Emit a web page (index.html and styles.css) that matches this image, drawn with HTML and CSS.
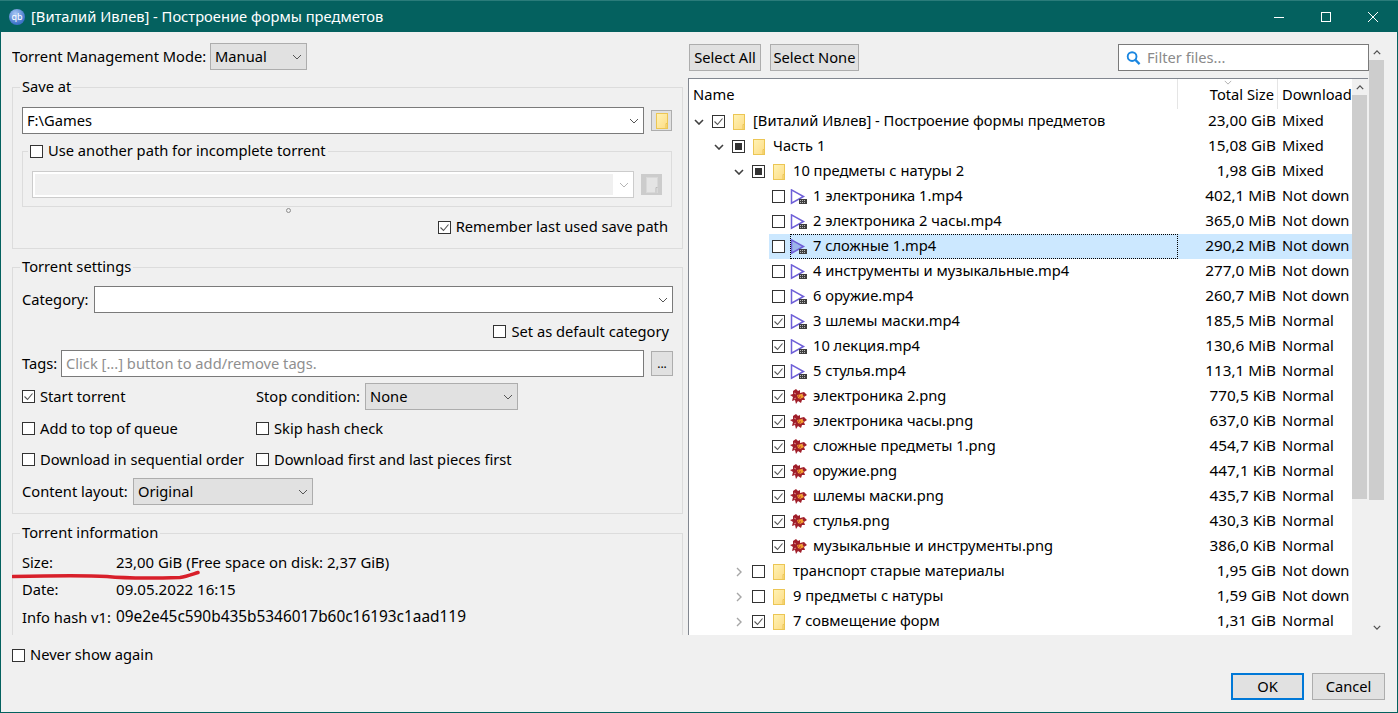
FILE: index.html
```html
<!DOCTYPE html>
<html lang="ru">
<head>
<meta charset="utf-8">
<title>[Виталий Ивлев] - Построение формы предметов</title>
<link rel="stylesheet" href="styles.css">
</head>
<body>
<svg class="defs" aria-hidden="true">
  <symbol id="chev" viewBox="0 0 10 6"><path d="M1 1l4 4 4-4" fill="none" stroke="currentColor"/></symbol>
  <symbol id="chev-bold" viewBox="0 0 10 6"><path d="M1 1l4 4 4-4" fill="none" stroke="currentColor" stroke-width="1.6"/></symbol>
  <symbol id="chev-r" viewBox="0 0 6 10"><path d="M1 1l4 4-4 4" fill="none" stroke="currentColor" stroke-width="1.4"/></symbol>
  <symbol id="up" viewBox="0 0 10 6"><path d="M1 5l4-4 4 4" fill="none" stroke="currentColor" stroke-width="1.6"/></symbol>
  <symbol id="tick" viewBox="0 0 11 11"><path d="M1.5 5.5l3 3 5-6" fill="none" stroke="#555" stroke-width="1.1"/></symbol>
  <symbol id="folder" viewBox="0 0 12 16">
    <defs><linearGradient id="fg" x1="0" y1="0" x2="1" y2="1"><stop offset="0" stop-color="#fff3b5"/><stop offset="1" stop-color="#fddc86"/></linearGradient></defs>
    <rect x=".5" y=".5" width="11" height="15" fill="url(#fg)" stroke="#ecc654"/>
    <path d="M10 15.5v-5h1.5" fill="none" stroke="#ecc654"/>
  </symbol>
  <symbol id="folder-off" viewBox="0 0 12 16">
    <rect x=".5" y=".5" width="11" height="15" fill="#e4e4e4" stroke="#d8d8d8"/>
    <path d="M10 15.5v-5h1.5" fill="none" stroke="#bbb"/>
  </symbol>
  <symbol id="video" viewBox="0 0 18 16">
    <path class="vid-tri" d="M1.500 .9L13.500 7.500 1.500 14.200z"/>
    <rect x="9" y="10" width="8" height="5" fill="#3e3e3e"/>
    <path d="M10 11.500h1m1 0h1m1 0h1M10 13.500h1m1 0h1m1 0h1" stroke="#b8b8b8"/>
  </symbol>
  <symbol id="png" viewBox="0 0 18 16">
    <path d="M6 0l2 2 2-1 0 3 4-1 3 3-3 2 1 3-3 0-1 3-3-2-2 3-1-4-3 1 1-4-3-2 3-1 0-3z" fill="#a01f2a"/>
    <path d="M4 4l2 1M4 10l2-1M13 5l-2 1" stroke="#d98a8a"/>
    <path d="M7 6l5-1 2 3-4 2-2-1z" fill="#f2a12e"/>
    <path d="M8 7h1m1 1h1m-2 1h1" stroke="#b3331f"/>
  </symbol>
</svg>

<div class="window">
  <header class="titlebar">
    <span class="app-icon">qb</span>
    <span class="title">[Виталий Ивлев] - Построение формы предметов</span>
    <div class="win-btns">
      <svg class="win-btn" viewBox="0 0 10 10"><path d="M0 5.500h10" stroke="#fff"/></svg>
      <svg class="win-btn" viewBox="0 0 10 10"><rect x=".5" y=".5" width="9" height="9" fill="none" stroke="#fff"/></svg>
      <svg class="win-btn" viewBox="0 0 10 10"><path d="M0 0l10 10M10 0L0 10" stroke="#fff"/></svg>
    </div>
  </header>

  <main class="content">
    <section class="left">
      <div class="mode-row">
        <span class="lab-mode">Torrent Management Mode:</span>
        <div class="combo btnlike w-mode"><span>Manual</span><svg class="arrow"><use href="#chev"/></svg></div>
      </div>

      <fieldset class="group save-group">
        <legend>Save at</legend>
        <div class="path-row">
          <div class="combo edit grow"><span>F:\Games</span><svg class="arrow"><use href="#chev"/></svg></div>
          <button class="browse"><svg class="browse-ico"><use href="#folder"/></svg></button>
        </div>
        <fieldset class="group sub-group">
          <legend class="check-legend"><span class="cb"></span>Use another path for incomplete torrent</legend>
          <div class="path-row">
            <div class="combo disabled grow"><span class="disabled-fill"></span><svg class="arrow"><use href="#chev"/></svg></div>
            <button class="browse off"><svg class="browse-ico"><use href="#folder-off"/></svg></button>
          </div>
        </fieldset>
        <div class="handle-row"><span class="handle"></span></div>
        <div class="right-check tall"><span class="cb"><svg><use href="#tick"/></svg></span>Remember last used save path</div>
      </fieldset>

      <fieldset class="group settings-group">
        <legend>Torrent settings</legend>
        <div class="field-row">
          <span class="lab-cat">Category:</span>
          <div class="combo edit grow"><span></span><svg class="arrow"><use href="#chev"/></svg></div>
        </div>
        <div class="right-check default-row"><span class="cb"></span>Set as default category</div>
        <div class="field-row">
          <span class="lab-tags">Tags:</span>
          <div class="line-input grow placeholder">Click [...] button to add/remove tags.</div>
          <button class="dots">...</button>
        </div>
        <div class="options">
          <label class="opt"><span class="cb"><svg><use href="#tick"/></svg></span>Start torrent</label>
          <div class="field-row"><span class="lab-stop">Stop condition:</span><div class="combo btnlike w-stop"><span>None</span><svg class="arrow"><use href="#chev"/></svg></div></div>
          <label class="opt"><span class="cb"></span>Add to top of queue</label>
          <label class="opt"><span class="cb"></span>Skip hash check</label>
          <label class="opt"><span class="cb"></span>Download in sequential order</label>
          <label class="opt"><span class="cb"></span>Download first and last pieces first</label>
          <div class="field-row span2"><span class="lab-layout">Content layout:</span><div class="combo btnlike w-layout"><span>Original</span><svg class="arrow"><use href="#chev"/></svg></div></div>
        </div>
      </fieldset>

      <fieldset class="group info-group">
        <legend>Torrent information</legend>
        <div class="info-grid">
          <span>Size:</span><span class="v-size">23,00 GiB (Free space on disk: 2,37 GiB)</span>
          <span>Date:</span><span class="v-date">09.05.2022 16:15</span>
          <span>Info hash v1:</span><span class="v-hash">09e2e45c590b435b5346017b60c16193c1aad119</span>
        </div>
      </fieldset>
      <svg class="scribble" viewBox="0 0 190 10"><path d="M1 7.500C40 6.500 80 6.500 95 7.500 115 9.500 150 9 168 8.500 175 7.500 181 5 186 3.500" fill="none" stroke="#d81f2a" stroke-width="3.500" stroke-linecap="round"/></svg>
    </section>

    <section class="right">
      <div class="right-main">
        <div class="toolbar">
          <button class="btn sel-all">Select All</button>
          <button class="btn sel-none">Select None</button>
          <div class="filter">
            <svg class="search" viewBox="0 0 16 16"><circle cx="6.500" cy="6.500" r="4.700" fill="none" stroke="#1a86e0" stroke-width="2"/><path d="M10 10l4.500 4.500" stroke="#1a86e0" stroke-width="2.400"/></svg>
            <span class="placeholder-f">Filter files...</span>
          </div>
        </div>
        <div class="tree">
          <div class="tree-body">
            <div class="tree-head">
              <div class="h-name">Name</div>
              <div class="h-size">Total Size<svg class="sort"><use href="#chev"/></svg></div>
              <div class="h-prio">Download</div>
            </div>
            <div class="rows">
              <div class="row l0"><span class="twist open"><svg class="chev-d"><use href="#chev-bold"/></svg></span><div class="item"><span class="cb"><svg><use href="#tick"/></svg></span><div class="name-cell"><svg class="ico-folder"><use href="#folder"/></svg><span class="name">[Виталий Ивлев] - Построение формы предметов</span></div><span class="size">23,00 GiB</span><span class="prio">Mixed</span></div></div>
              <div class="row l1"><span class="twist open"><svg class="chev-d"><use href="#chev-bold"/></svg></span><div class="item"><span class="cb part"></span><div class="name-cell"><svg class="ico-folder"><use href="#folder"/></svg><span class="name">Часть 1</span></div><span class="size">15,08 GiB</span><span class="prio">Mixed</span></div></div>
              <div class="row l2"><span class="twist open"><svg class="chev-d"><use href="#chev-bold"/></svg></span><div class="item"><span class="cb part"></span><div class="name-cell"><svg class="ico-folder"><use href="#folder"/></svg><span class="name">10 предметы с натуры 2</span></div><span class="size">1,98 GiB</span><span class="prio">Mixed</span></div></div>
              <div class="row l3"><span class="twist"></span><div class="item"><span class="cb"></span><div class="name-cell"><svg class="ico-file"><use href="#video"/></svg><span class="name">1 электроника 1.mp4</span></div><span class="size">402,1 MiB</span><span class="prio">Not down</span></div></div>
              <div class="row l3"><span class="twist"></span><div class="item"><span class="cb"></span><div class="name-cell"><svg class="ico-file"><use href="#video"/></svg><span class="name">2 электроника 2 часы.mp4</span></div><span class="size">365,0 MiB</span><span class="prio">Not down</span></div></div>
              <div class="row l3"><span class="twist"></span><div class="item selected"><span class="cb"></span><div class="name-cell focus"><svg class="ico-file"><use href="#video"/></svg><span class="name">7 сложные 1.mp4</span></div><span class="size">290,2 MiB</span><span class="prio">Not down</span></div></div>
              <div class="row l3"><span class="twist"></span><div class="item"><span class="cb"></span><div class="name-cell"><svg class="ico-file"><use href="#video"/></svg><span class="name">4 инструменты и музыкальные.mp4</span></div><span class="size">277,0 MiB</span><span class="prio">Not down</span></div></div>
              <div class="row l3"><span class="twist"></span><div class="item"><span class="cb"></span><div class="name-cell"><svg class="ico-file"><use href="#video"/></svg><span class="name">6 оружие.mp4</span></div><span class="size">260,7 MiB</span><span class="prio">Not down</span></div></div>
              <div class="row l3"><span class="twist"></span><div class="item"><span class="cb"><svg><use href="#tick"/></svg></span><div class="name-cell"><svg class="ico-file"><use href="#video"/></svg><span class="name">3 шлемы маски.mp4</span></div><span class="size">185,5 MiB</span><span class="prio">Normal</span></div></div>
              <div class="row l3"><span class="twist"></span><div class="item"><span class="cb"><svg><use href="#tick"/></svg></span><div class="name-cell"><svg class="ico-file"><use href="#video"/></svg><span class="name">10 лекция.mp4</span></div><span class="size">130,6 MiB</span><span class="prio">Normal</span></div></div>
              <div class="row l3"><span class="twist"></span><div class="item"><span class="cb"><svg><use href="#tick"/></svg></span><div class="name-cell"><svg class="ico-file"><use href="#video"/></svg><span class="name">5 стулья.mp4</span></div><span class="size">113,1 MiB</span><span class="prio">Normal</span></div></div>
              <div class="row l3"><span class="twist"></span><div class="item"><span class="cb"><svg><use href="#tick"/></svg></span><div class="name-cell"><svg class="ico-file"><use href="#png"/></svg><span class="name">электроника 2.png</span></div><span class="size">770,5 KiB</span><span class="prio">Normal</span></div></div>
              <div class="row l3"><span class="twist"></span><div class="item"><span class="cb"><svg><use href="#tick"/></svg></span><div class="name-cell"><svg class="ico-file"><use href="#png"/></svg><span class="name">электроника часы.png</span></div><span class="size">637,0 KiB</span><span class="prio">Normal</span></div></div>
              <div class="row l3"><span class="twist"></span><div class="item"><span class="cb"><svg><use href="#tick"/></svg></span><div class="name-cell"><svg class="ico-file"><use href="#png"/></svg><span class="name">сложные предметы 1.png</span></div><span class="size">454,7 KiB</span><span class="prio">Normal</span></div></div>
              <div class="row l3"><span class="twist"></span><div class="item"><span class="cb"><svg><use href="#tick"/></svg></span><div class="name-cell"><svg class="ico-file"><use href="#png"/></svg><span class="name">оружие.png</span></div><span class="size">447,1 KiB</span><span class="prio">Normal</span></div></div>
              <div class="row l3"><span class="twist"></span><div class="item"><span class="cb"><svg><use href="#tick"/></svg></span><div class="name-cell"><svg class="ico-file"><use href="#png"/></svg><span class="name">шлемы маски.png</span></div><span class="size">435,7 KiB</span><span class="prio">Normal</span></div></div>
              <div class="row l3"><span class="twist"></span><div class="item"><span class="cb"><svg><use href="#tick"/></svg></span><div class="name-cell"><svg class="ico-file"><use href="#png"/></svg><span class="name">стулья.png</span></div><span class="size">430,3 KiB</span><span class="prio">Normal</span></div></div>
              <div class="row l3"><span class="twist"></span><div class="item"><span class="cb"><svg><use href="#tick"/></svg></span><div class="name-cell"><svg class="ico-file"><use href="#png"/></svg><span class="name">музыкальные и инструменты.png</span></div><span class="size">386,0 KiB</span><span class="prio">Normal</span></div></div>
              <div class="row l2"><span class="twist"><svg class="chev-s"><use href="#chev-r"/></svg></span><div class="item"><span class="cb"></span><div class="name-cell"><svg class="ico-folder"><use href="#folder"/></svg><span class="name">транспорт старые материалы</span></div><span class="size">1,95 GiB</span><span class="prio">Not down</span></div></div>
              <div class="row l2"><span class="twist"><svg class="chev-s"><use href="#chev-r"/></svg></span><div class="item"><span class="cb"></span><div class="name-cell"><svg class="ico-folder"><use href="#folder"/></svg><span class="name">9 предметы с натуры</span></div><span class="size">1,59 GiB</span><span class="prio">Not down</span></div></div>
              <div class="row l2"><span class="twist"><svg class="chev-s"><use href="#chev-r"/></svg></span><div class="item"><span class="cb"><svg><use href="#tick"/></svg></span><div class="name-cell"><svg class="ico-folder"><use href="#folder"/></svg><span class="name">7 совмещение форм</span></div><span class="size">1,31 GiB</span><span class="prio">Normal</span></div></div>
            </div>
          </div>
          <div class="vscroll inner">
            <svg class="sc-arrow"><use href="#up"/></svg>
            <div class="thumb"></div>
          </div>
        </div>
      </div>
      <div class="vscroll outer">
        <svg class="sc-arrow"><use href="#up"/></svg>
        <div class="thumb"></div>
        <svg class="sc-arrow down"><use href="#chev-bold"/></svg>
      </div>
    </section>
  </main>

  <footer class="footer">
    <label class="never"><span class="cb"></span>Never show again</label>
    <div class="actions">
      <button class="btn action primary">OK</button>
      <button class="btn action">Cancel</button>
    </div>
  </footer>
</div>
</body>
</html>
```
FILE: styles.css
```css
* { box-sizing: border-box; }
html, body { margin: 0; padding: 0; }
body {
  width: 1398px;
  height: 713px;
  overflow: hidden;
  font-family: "Noto Sans", "Open Sans", "Liberation Sans", sans-serif;
  font-size: 14.7px;
  line-height: 20px;
  color: #000;
  background: #f0f0f0;
}
button { font: inherit; color: inherit; margin: 0; padding: 0; }
.defs { width: 0; height: 0; position: absolute; }

.window {
  width: 1398px;
  height: 713px;
  display: flex;
  flex-direction: column;
  border: 1px solid #04615f;
  border-top: 0;
  background: #f0f0f0;
}

/* title bar */
.titlebar {
  height: 32px;
  flex: none;
  margin: 0 -1px;
  display: flex;
  align-items: center;
  padding-left: 9px;
  background: #04615f;
  border-top: 1px solid #2a7c7a;
  color: #fff;
}
.app-icon {
  width: 16px;
  height: 16px;
  border-radius: 50%;
  background: radial-gradient(circle at 40% 30%, #a9c8f5, #3d72c9 70%);
  font-size: 9px;
  line-height: 15px;
  text-align: center;
  color: #fff;
}
.title { margin-left: 6px; padding-bottom: 2px; }
.win-btns { margin-left: auto; display: flex; padding-right: 20px; gap: 37px; }
.win-btn { width: 10px; height: 10px; display: block; }

/* main layout */
.content { height: 603px; flex: none; display: flex; }
.left {
  width: 671px;
  margin-left: 11px;
  padding-top: 11px;
  display: flex;
  flex-direction: column;
  position: relative;
  overflow: hidden;
}
.right { margin-left: 5px; padding-top: 12px; display: flex; }
.right-main { width: 680px; display: flex; flex-direction: column; }

/* form bits */
.mode-row, .field-row, .path-row { display: flex; align-items: center; }
.mode-row { height: 27px; }
.lab-mode, .lab-cat, .lab-tags, .lab-stop, .lab-layout { padding-bottom: 2px; white-space: nowrap; }
.lab-mode { width: 198px; }
.lab-cat { width: 72px; }
.lab-tags { width: 39px; }
.lab-stop { width: 109px; }
.lab-layout { width: 111px; }
.grow { flex: 1 1 0; min-width: 0; }

.combo {
  height: 27px;
  display: flex;
  align-items: center;
  justify-content: space-between;
  padding: 0 4px 1px 4px;
  border: 1px solid #adadad;
}
.combo .arrow { width: 10px; height: 6px; margin-top: 1px; color: #555; flex: none; }
.btnlike { background: #e1e1e1; }
.edit { background: #fff; border-color: #7a7a7a; }
.w-mode { width: 97px; }
.w-stop { width: 153px; }
.w-layout { width: 180px; }
.disabled { background: #fff; border-color: #cccccc; padding: 2px 4px 2px 2px; }
.combo.disabled .arrow { color: #b5b5b5; margin-top: 0; }
.disabled-fill { align-self: stretch; width: 578px; background: #f0f0f0; }

.group {
  margin: 0;
  padding: 0;
  min-width: 0;
  border: 1px solid #dcdcdc;
}
.group > legend { padding: 0 2px 2px; margin-left: -2px; line-height: 18px; white-space: nowrap; }

.save-group { margin-top: 7px; padding: 10px 10px 7px 9px; height: 172px; }
.path-row { gap: 7px; }
.browse {
  width: 21px;
  height: 21px;
  border: 1px solid #adadad;
  background: #e1e1e1;
  display: flex;
  align-items: center;
  justify-content: center;
}
.browse.off { background: #cccccc; border-color: #cccccc; }
.browse-ico { width: 12px; height: 16px; }

.sub-group { margin-top: 7px; padding: 10px 9px 8px 9px; }
.group.sub-group > legend { margin-left: -4px; }
.check-legend { display: flex; align-items: center; }
.cb {
  width: 13px;
  height: 13px;
  flex: none;
  display: inline-block;
  border: 1px solid #333;
  background: #fff;
  margin-right: 5px;
  margin-top: 2px;
}
.cb svg { display: block; width: 11px; height: 11px; }
.cb.part { box-shadow: inset 0 0 0 2px #fff, inset 0 0 0 8px #333; }

.handle-row { height: 7px; display: flex; align-items: center; padding-left: 264px; }
.handle { width: 5px; height: 5px; border: 1px solid #8e8e8e; border-radius: 50%; }
.right-check { display: flex; align-items: center; justify-content: flex-end; padding: 0 4px 2px 0; white-space: nowrap; }
.tall { height: 26px; }

.settings-group { margin-top: 8px; padding: 9px 9px 8px 9px; height: 257px; }
.default-row { height: 37px; }
.line-input { height: 27px; border: 1px solid #7a7a7a; background: #fff; padding: 0 4px; line-height: 25px; }
.placeholder { color: #8f8f8f; }
.dots {
  width: 22px;
  height: 25px;
  margin-left: 7px;
  border: 1px solid #adadad;
  background: #e1e1e1;
  font-size: 12px;
}
.options {
  margin-top: 6px;
  display: grid;
  grid-template-columns: 234px 1fr;
  grid-template-rows: 32px 31px 32px 27px;
  align-items: start;
}
.opt { display: flex; align-items: center; white-space: nowrap; height: 27px; padding-bottom: 2px; }
.span2 { grid-column: 1 / 3; }

.info-group { margin-top: 9px; flex: 1; border-bottom: 0; padding: 6px 0 0 9px; }
.info-grid {
  display: grid;
  grid-template-columns: 94px 1fr;
  grid-auto-rows: 27.5px;
  align-items: center;
  white-space: nowrap;
}
.info-grid > span { padding-bottom: 2px; }
.v-size { font-size: 14.9px; }
.v-date { font-size: 15.1px; }
.v-hash { font-size: 15.4px; }
.scribble { position: absolute; left: 0; top: 537px; width: 190px; height: 10px; overflow: visible; }

/* right side */
.toolbar { height: 27px; flex: none; display: flex; padding-left: 1px; }
.btn { background: #e1e1e1; border: 1px solid #adadad; height: 27px; padding-bottom: 1px; }
.sel-all { width: 72px; }
.sel-none { width: 89px; margin-left: 9px; }
.filter {
  margin-left: auto;
  margin-right: -1px;
  width: 251px;
  height: 27px;
  background: #fff;
  border: 1px solid #7a7a7a;
  display: flex;
  align-items: center;
  padding-left: 7px;
}
.search { width: 15px; height: 16px; }
.placeholder-f { margin-left: 6px; color: #8a8a8a; padding-bottom: 1px; }

.tree {
  margin-top: 7px;
  flex: 1;
  min-height: 0;
  display: flex;
  background: #fff;
  border: 1px solid #828790;
  border-bottom: 0;
}
.tree-body { width: 663px; flex: none; overflow: hidden; }
.tree-head { height: 30px; display: flex; }
.tree-head > div { white-space: nowrap; overflow: hidden; padding-top: 5px; height: 30px; }
.h-name { width: 489px; padding-left: 4px; border-right: 1px solid #e5e5e5; }
.h-size { width: 100px; text-align: right; padding-right: 3px; border-right: 1px solid #e5e5e5; position: relative; }
.sort { position: absolute; left: 46px; top: 1px; width: 8px; height: 5px; color: #a0a0a0; }
.h-prio { flex: 1; padding-left: 4px; }

.rows { height: 525px; overflow: hidden; }
.row { height: 25px; display: flex; }
.l1 { margin-left: 20px; }
.l2 { margin-left: 40px; }
.l3 { margin-left: 60px; }
.twist { width: 20px; flex: none; display: flex; align-items: center; justify-content: center; }
.chev-d { width: 10px; height: 6px; color: #404040; }
.chev-s { width: 6px; height: 10px; color: #a6a6a6; }
.item { flex: 1; min-width: 0; display: flex; align-items: center; padding-left: 3px; height: 25px; }
.item .cb { margin-right: 5px; margin-top: 0; }
.selected { background: #cce8ff; --vf: #9db4ea; }
.name-cell { flex: 1; min-width: 0; height: 25px; display: flex; align-items: center; white-space: nowrap; overflow: hidden; }
.name { padding-bottom: 3px; }
.focus { outline: 1px dotted #000; outline-offset: -1px; }
.ico-folder { width: 12px; height: 16px; margin-left: 3px; margin-right: 8px; flex: none; }
.ico-file { width: 18px; height: 16px; margin-right: 5px; flex: none; }
.vid-tri { fill: var(--vf, #fff); stroke: #6e5fd8; stroke-width: 1.500; }
.size { width: 98px; flex: none; text-align: right; white-space: nowrap; font-size: 15.3px; padding-bottom: 3px; }
.prio { width: 70px; margin-left: 6px; flex: none; overflow: hidden; white-space: nowrap; padding-bottom: 3px; }

.vscroll { display: flex; flex-direction: column; background: #f0f0f0; width: 16px; flex: none; }
.vscroll .thumb { width: 15px; height: 404px; background: #cdcdcd; }
.sc-arrow { width: 8px; height: 5px; margin: 6px 4px 5px; color: #505050; flex: none; }
.sc-arrow.down { margin-top: auto; margin-bottom: 5px; }
.vscroll.outer { margin-left: 1px; }
.vscroll.outer .thumb { height: 440px; }

/* footer */
.footer { flex: 1; display: flex; flex-direction: column; }
.never { margin: 2px 0 0 11px; height: 36px; display: flex; align-items: center; padding-bottom: 2px; }
.actions { display: flex; justify-content: flex-end; gap: 8px; padding-right: 12px; }
.action { width: 73px; }
.primary { border: 2px solid #0078d7; }
```
